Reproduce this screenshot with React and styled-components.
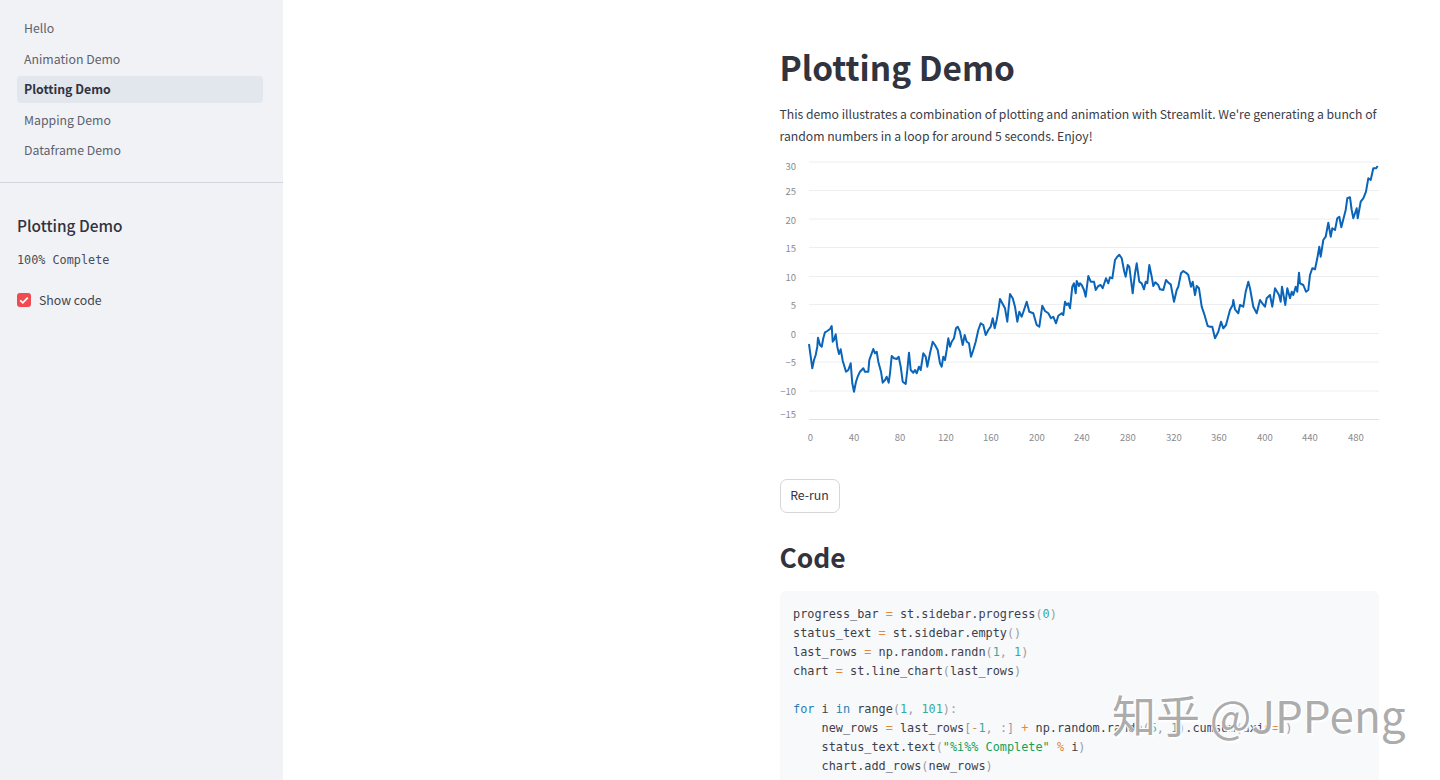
import React from 'react'
import styled, { createGlobalStyle } from 'styled-components'

const GlobalStyle = createGlobalStyle`
	html, body {
		margin: 0;
		height: 100%;
		overflow: hidden;
		background: #fff;
	}
	body {
		font-family: 'Noto Sans CJK SC', 'Noto Sans', sans-serif;
		color: #31333f;
	}
`

const navItems = ['Hello', 'Animation Demo', 'Plotting Demo', 'Mapping Demo', 'Dataframe Demo']

// traced from the picture: x = 770 + a / 3, y = 150 + b / 3
const leftTrace = [
	117,582, 122,620, 127,655, 132,630, 137,615, 142,590, 144,563, 150,585, 155,590, 160,565, 165,547, 172,543,
	180,537, 185,528, 188,575, 192,570, 197,553, 202,590, 207,612, 212,598, 218,632, 223,648, 228,665, 235,660,
	242,640, 247,700, 252,725, 258,695, 263,680, 270,665, 280,655, 285,665, 295,665, 298,630, 305,610, 310,597,
	315,610, 320,605, 325,635, 333,665, 338,698, 345,690, 350,680, 356,698, 360,670, 365,618, 372,625, 380,627,
	386,620, 392,650, 398,695, 407,702, 412,660, 417,608, 422,660, 430,668, 435,660, 440,670, 447,650, 452,660,
	460,610, 467,620, 472,650, 480,610, 488,575, 495,585, 503,600, 510,640, 515,650, 520,620, 525,630, 530,600,
	535,565, 540,590, 545,575, 552,565, 558,535, 563,530, 570,545, 578,585, 584,555, 590,575, 597,580, 603,620,
	610,600, 617,575, 625,540, 632,520, 640,525, 647,555, 655,540, 662,530, 668,505, 674,535, 680,510, 686,475,
	690,447, 697,460, 705,475, 712,515, 720,432, 728,445, 735,470, 742,515, 748,485, 755,500, 762,480, 770,455,
	778,485, 790,490, 800,525, 808,530, 817,467, 825,483, 835,490, 843,505, 850,500, 858,520, 865,497, 875,490,
	880,495, 885,455, 890,465, 895,460, 900,475, 907,410, 912,400, 917,430, 920,393, 927,408,
]

// same trace, second half: x = 1080 + a / 3
const rightTrace = [
	0,400, 5,405, 12,420, 17,440, 25,378, 32,395, 42,395, 47,420, 55,408, 62,405, 68,415, 78,385, 85,400, 90,382,
	97,385, 105,330, 112,320, 118,314, 125,325, 133,365, 137,380, 143,345, 148,350, 158,430, 165,370, 170,340,
	178,395, 185,400, 192,418, 197,395, 202,400, 208,345, 215,380, 220,408, 226,397, 235,405, 240,418, 250,420,
	258,390, 265,398, 272,403, 282,455, 290,420, 295,410, 303,370, 310,363, 320,370, 325,375, 333,410, 338,395,
	345,435, 350,408, 357,415, 365,470, 372,490, 383,528, 390,530, 397,530, 405,565, 415,545, 423,515, 430,535,
	438,525, 450,480, 458,465, 460,450, 465,478, 475,490, 480,465, 490,470, 497,425, 505,395, 510,415, 520,470,
	530,490, 540,450, 547,460, 555,470, 560,445, 570,435, 577,470, 585,415, 597,435, 602,455, 606,410, 616,465,
	622,415, 630,445, 635,425, 640,435, 647,410, 652,425, 657,368, 660,400, 670,405, 678,425, 685,420, 690,375,
	697,355, 705,358, 712,325, 718,290, 722,320, 730,270, 737,260, 745,218, 752,260, 757,235, 765,240, 772,205,
	778,200, 784,232, 797,180, 802,145, 810,142, 815,180, 820,205, 830,175, 833,205, 842,155, 850,145, 858,125,
	865,85, 872,90, 880,55, 888,55, 893,48,
]

const toPoints = (trace, originX) => {
	const out = []
	for (let i = 0; i < trace.length; i += 2) {
		out.push(`${(originX + trace[i] / 3 - 770).toFixed(1)},${(trace[i + 1] / 3).toFixed(1)}`)
	}
	return out.join(' ')
}

const linePoints = toPoints(leftTrace, 770) + ' ' + toPoints(rightTrace, 1080)

const gridRows = [
	{ label: '30', line: 12, text: 20 },
	{ label: '25', line: 40.5, text: 45 },
	{ label: '20', line: 69, text: 74 },
	{ label: '15', line: 97.5, text: 102 },
	{ label: '10', line: 126.5, text: 131 },
	{ label: '5', line: 154.5, text: 159 },
	{ label: '0', line: 183.5, text: 188 },
	{ label: '−5', line: 212, text: 216 },
	{ label: '−10', line: 241, text: 245 },
	{ label: '−15', line: 269.5, text: 268 },
]

const xTicks = [
	['0', 40.5], ['40', 84], ['80', 130], ['120', 176], ['160', 221], ['200', 267], ['240', 312],
	['280', 358], ['320', 404], ['360', 449], ['400', 495], ['440', 540], ['480', 586],
]

const LineChart = () => (
	<ChartSvg viewBox='0 0 620 300' width='620' height='300'>
		{gridRows.map((row) => (
			<g key={row.label}>
				<line
					x1='39'
					x2='609'
					y1={row.line}
					y2={row.line}
					stroke={row.label === '−15' ? '#dfe1e5' : '#eceef1'}
				/>
				<text x='26' y={row.text} textAnchor='end'>{row.label}</text>
			</g>
		))}
		{xTicks.map(([label, x]) => (
			<text key={label} x={x} y='291' textAnchor='middle'>{label}</text>
		))}
		<polyline points={linePoints} fill='none' stroke='#0a64b8' strokeWidth='2' strokeLinejoin='round' />
	</ChartSvg>
)

const App = () => {
	return (
		<Page>
			<GlobalStyle />
			<Sidebar>
				<Nav>
					{navItems.map((item) => (
						<NavItem key={item} $active={item === 'Plotting Demo'}>{item}</NavItem>
					))}
				</Nav>
				<SidebarBody>
					<SidebarTitle>Plotting Demo</SidebarTitle>
					<StatusText>100% Complete</StatusText>
					<CheckRow>
						<CheckBox>
							<svg viewBox='0 0 14 14' width='14' height='14'>
								<path d='M3.2 7.3l2.6 2.5 5-5.2' fill='none' stroke='#fff' strokeWidth='1.8' />
							</svg>
						</CheckBox>
						Show code
					</CheckRow>
				</SidebarBody>
			</Sidebar>
			<Main>
				<Column>
					<Title>Plotting Demo</Title>
					<Intro>
						This demo illustrates a combination of plotting and animation with Streamlit. We're generating a
						bunch of random numbers in a loop for around 5 seconds. Enjoy!
					</Intro>
					<ChartWrap>
						<LineChart />
					</ChartWrap>
					<RerunButton>Re-run</RerunButton>
					<SectionTitle>Code</SectionTitle>
					<CodeBlock>
						progress_bar <Op>=</Op> st.sidebar.progress<P>(</P><Num>0</Num><P>)</P>{'\n'}
						status_text <Op>=</Op> st.sidebar.empty<P>()</P>{'\n'}
						last_rows <Op>=</Op> np.random.randn<P>(</P><Num>1</Num><P>,</P> <Num>1</Num><P>)</P>{'\n'}
						chart <Op>=</Op> st.line_chart<P>(</P>last_rows<P>)</P>{'\n'}
						{'\n'}
						<Kw>for</Kw> i <Kw>in</Kw> range<P>(</P><Num>1</Num><P>,</P> <Num>101</Num><P>):</P>{'\n'}
						{'    '}new_rows <Op>=</Op> last_rows<P>[</P><Op>-</Op><Num>1</Num><P>,</P> <P>:]</P> <Op>+</Op> np.random.randn<P>(</P><Num>5</Num><P>,</P> <Num>1</Num><P>)</P>.cumsum<P>(</P>axis<Op>=</Op><Num>0</Num><P>)</P>{'\n'}
						{'    '}status_text.text<P>(</P><Str>"%i%% Complete"</Str> <Op>%</Op> i<P>)</P>{'\n'}
						{'    '}chart.add_rows<P>(</P>new_rows<P>)</P>
					</CodeBlock>
				</Column>
			</Main>
			<Watermark>知乎 @JPPeng</Watermark>
		</Page>
	)
}

const Page = styled.div`
	position: relative;
	display: flex;
	height: 780px;
	overflow: hidden;
`

const Sidebar = styled.aside`
	flex: 0 0 283px;
	background: #f0f2f6;
	box-sizing: border-box;
`

const Nav = styled.nav`
	display: flex;
	flex-direction: column;
	gap: 3.5px;
	padding: 15px 20px 17px 17px;
	border-bottom: 1px solid #d3d6dc;
	height: 150px;
`

const NavItem = styled.div`
	height: 27px;
	line-height: 27px;
	padding-left: 7px;
	border-radius: 4px;
	font-size: 12.3px;
	color: ${(p) => (p.$active ? '#31333f' : '#5f616d')};
	font-weight: ${(p) => (p.$active ? 600 : 400)};
	background: ${(p) => (p.$active ? '#e2e6ed' : 'transparent')};
`

const SidebarBody = styled.div`
	padding: 30px 17px 0;
`

const SidebarTitle = styled.h3`
	margin: 0;
	font-size: 15.4px;
	line-height: 24px;
	font-weight: 500;
	color: #31333f;
`

const StatusText = styled.div`
	margin-top: 14px;
	font-family: 'DejaVu Sans Mono', monospace;
	font-size: 11.8px;
	line-height: 18px;
	color: #4a4c57;
`

const CheckRow = styled.label`
	display: flex;
	align-items: center;
	gap: 8px;
	margin-top: 21px;
	font-size: 12.3px;
	line-height: 20px;
	color: #42444f;
`

const CheckBox = styled.span`
	display: flex;
	width: 14px;
	height: 14px;
	border-radius: 3px;
	background: #f04b50;
`

const Main = styled.main`
	flex: 1;
	display: flex;
	justify-content: flex-end;
	padding-right: 61px;
`

const Column = styled.div`
	width: 599.5px;
	padding-top: 43px;
`

const Title = styled.h1`
	margin: 0;
	font-size: 33.4px;
	line-height: 48px;
	font-weight: 700;
	color: #31333f;
`

const Intro = styled.p`
	margin: 12px 0 0;
	font-size: 12.2px;
	line-height: 22px;
	color: #3a3c48;
`

const ChartWrap = styled.div`
	margin: 3px 0 0 -9.5px;
	height: 300px;
`

const ChartSvg = styled.svg`
	display: block;
	text {
		font-family: 'Noto Sans CJK SC', 'Noto Sans', sans-serif;
		font-size: 9.5px;
		fill: #8a8b90;
	}
`

const RerunButton = styled.button`
	display: block;
	margin-top: 29px;
	width: 60px;
	height: 34px;
	padding: 0 0 2px;
	background: #fff;
	border: 1px solid #d6d6d9;
	border-radius: 7px;
	font-family: inherit;
	font-size: 12.3px;
	color: #31333f;
`

const SectionTitle = styled.h2`
	margin: 23px 0 0;
	font-size: 26.4px;
	line-height: 42px;
	font-weight: 600;
	color: #31333f;
`

const CodeBlock = styled.pre`
	margin: 13px 0 0;
	padding: 14px 13.5px 13px;
	background: #f8f9fb;
	border-radius: 6px;
	font-family: 'DejaVu Sans Mono', monospace;
	font-size: 11.85px;
	line-height: 19px;
	color: #3d3f4b;
`

const Op = styled.span`
	color: #e0883b;
`

const P = styled.span`
	color: #9a9ca5;
`

const Num = styled.span`
	color: #3aa99a;
`

const Kw = styled.span`
	color: #2a7fb5;
`

const Str = styled.span`
	color: #15a05a;
`

const Watermark = styled.div`
	position: absolute;
	left: 1112px;
	top: 682px;
	font-size: 44px;
	line-height: 64px;
	white-space: nowrap;
	color: rgba(140, 140, 140, 0.72);
	text-shadow: 1px 1px 1px #fff, -1px -1px 1px #fff, 2px 2px 2px #fff;
`

export default App
